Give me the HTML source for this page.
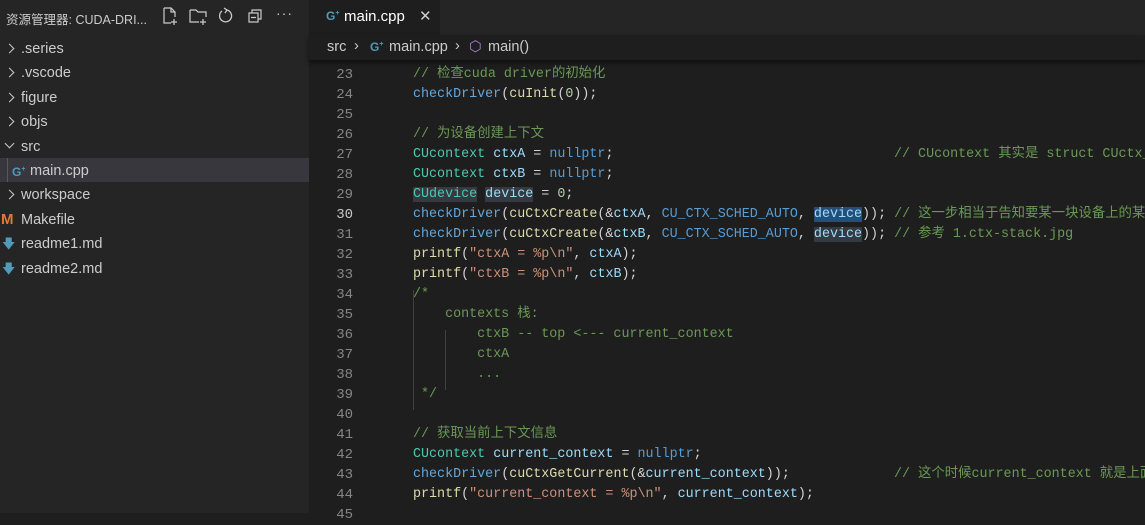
<!DOCTYPE html><html><head><meta charset="utf-8"><style>
*{margin:0;padding:0;box-sizing:border-box}
body{width:1145px;height:513px;overflow:hidden;background:#1e1e1e;font-family:"Liberation Sans","Noto Sans CJK SC",sans-serif;position:relative}
#side{position:absolute;left:0;top:0;width:309px;height:513px;background:#252526;color:#ccc}
.title{position:absolute;left:6px;top:9px;font-size:12.5px;color:#ccc}
.ic{position:absolute;top:6px}
.row{position:absolute;left:0;width:309px;height:24px;font-size:14.5px;line-height:24px;color:#ccc}
.row .t{position:absolute;left:21px}
.chev{position:absolute;left:6px;top:8px;width:7px;height:7px;border-right:1.5px solid #ccc;border-bottom:1.5px solid #ccc;transform:rotate(-45deg)}
.chev.d{transform:rotate(45deg);top:5px}
#tabs{position:absolute;left:309px;top:0;width:836px;height:35px;background:#252526}
#tab{position:absolute;left:309px;top:0;width:131px;height:35px;background:#1e1e1e;color:#fff;font-size:15px}
#crumb{position:absolute;left:309px;top:35px;width:836px;height:25px;background:#1e1e1e;color:#ccc;font-size:14.5px;box-shadow:0 3px 4px #111}
.code{position:absolute;left:0;font-family:"Liberation Mono","Noto Sans CJK SC",monospace;font-size:13.37px;white-space:pre;color:#d4d4d4}
.ln{position:absolute;width:353px;text-align:right;color:#858585;height:20px;line-height:20px;font-size:14px}
.cl{position:absolute;left:413px;height:20px;line-height:20px}
.c{color:#6a9955}.f{color:#dcdcaa}.y{color:#4ec9b0}.v{color:#9cdcfe}.k{color:#569cd6}.s{color:#ce9178}.n{color:#b5cea8}.fn{color:#61a8e0}
.cpp{color:#519aba;font-weight:bold;font-size:12px}
</style></head><body>
<div id="side">
<div class="title">资源管理器: CUDA-DRI...</div>
<svg class="ic" style="left:160px" width="20" height="20" viewBox="0 0 20 20" fill="none" stroke="#ccc" stroke-width="1.2"><path d="M4 2h7l4 4v5M4 2v15h7M11 2v4h4M14 13v6M11 16h6"/></svg>
<svg class="ic" style="left:188px" width="20" height="20" viewBox="0 0 20 20" fill="none" stroke="#ccc" stroke-width="1.2"><path d="M2 4h6l2 2h8v5M2 4v12h9M15 13v6M12 16h6"/></svg>
<svg class="ic" style="left:217px" width="18" height="20" viewBox="0 0 18 20" fill="none" stroke="#ccc" stroke-width="1.3"><path d="M5 5A6 6 0 1 0 10 4M10 4L7 2M10 4L8 7"/></svg>
<svg class="ic" style="left:246px" width="18" height="20" viewBox="0 0 18 20" fill="none" stroke="#ccc" stroke-width="1.2"><rect x="3" y="7" width="9" height="9"/><path d="M6 7V4h9v9h-3M5 11.5h5"/></svg>
<div style="position:absolute;left:276px;top:5px;color:#ccc;font-size:14px;letter-spacing:1px">···</div>
<div class="row" style="top:37px"><div class="chev"></div><span class="t">.series</span></div>
<div class="row" style="top:61px"><div class="chev"></div><span class="t">.vscode</span></div>
<div class="row" style="top:86px"><div class="chev"></div><span class="t">figure</span></div>
<div class="row" style="top:110px"><div class="chev"></div><span class="t">objs</span></div>
<div class="row" style="top:135px"><div class="chev d"></div><span class="t">src</span></div>
<div class="row" style="top:158px;background:#37373d"><div style="position:absolute;left:7px;top:0;width:1px;height:24px;background:#585858"></div><span class="cpp" style="position:absolute;left:12px">G<sup style="font-size:7px">+</sup></span><span class="t" style="left:30px;top:1px">main.cpp</span></div>
<div class="row" style="top:183px"><div class="chev"></div><span class="t">workspace</span></div>
<div class="row" style="top:208px"><span style="position:absolute;left:1px;color:#e37933;font-weight:bold;font-size:15px">M</span><span class="t">Makefile</span></div>
<div class="row" style="top:232px"><span style="position:absolute;left:2px;color:#519aba;font-size:13px">🡇</span><span class="t">readme1.md</span></div>
<div class="row" style="top:257px"><span style="position:absolute;left:2px;color:#519aba;font-size:13px">🡇</span><span class="t">readme2.md</span></div>
</div>
<div id="tabs"></div>
<div id="tab"><span class="cpp" style="position:absolute;left:17px;top:9px">G<sup style="font-size:7px">+</sup></span><span style="position:absolute;left:35px;top:8px">main.cpp</span><span style="position:absolute;left:110px;top:7px;color:#ccc;font-size:15px">✕</span></div>
<div id="crumb"><span style="position:absolute;left:18px;top:4px">src</span><span style="position:absolute;left:45px;top:3px">›</span><span class="cpp" style="position:absolute;left:61px;top:5px">G<sup style="font-size:7px">+</sup></span><span style="position:absolute;left:80px;top:4px">main.cpp</span><span style="position:absolute;left:146px;top:3px">›</span><span style="position:absolute;left:160px;top:4px;color:#b180d7">⬡</span><span style="position:absolute;left:179px;top:4px">main()</span></div>
<div class="code" style="top:65px">
<div class="ln" style="top:0">23</div><div class="cl c" style="top:0">// 检查cuda driver的初始化</div>
<div class="ln" style="top:20px">24</div><div class="cl" style="top:20px"><span class="fn">checkDriver</span>(<span class="f">cuInit</span>(<span class="n">0</span>));</div>
<div class="ln" style="top:40px">25</div>
<div class="ln" style="top:60px">26</div><div class="cl c" style="top:60px">// 为设备创建上下文</div>
<div class="ln" style="top:80px">27</div><div class="cl" style="top:80px"><span class="y">CUcontext</span> <span class="v">ctxA</span> = <span class="k">nullptr</span>;</div><div class="cl c" style="top:80px;left:894px">// CUcontext 其实是 struct CUctx_st*</div>
<div class="ln" style="top:100px">28</div><div class="cl" style="top:100px"><span class="y">CUcontext</span> <span class="v">ctxB</span> = <span class="k">nullptr</span>;</div>
<div class="ln" style="top:120px">29</div><div class="cl" style="top:120px"><span class="y" style="background:#343a40">CUdevice</span> <span class="v" style="background:#343a40">device</span> = <span class="n">0</span>;</div>
<div class="ln" style="top:140px;color:#c6c6c6">30</div><div class="cl" style="top:140px"><span class="fn">checkDriver</span>(<span class="f">cuCtxCreate</span>(&amp;<span class="v">ctxA</span>, <span class="k">CU_CTX_SCHED_AUTO</span>, <span class="v" style="background:#264f78">device</span>)); <span class="c">// 这一步相当于告知要某一块设备上的某块</span></div>
<div class="ln" style="top:160px">31</div><div class="cl" style="top:160px"><span class="fn">checkDriver</span>(<span class="f">cuCtxCreate</span>(&amp;<span class="v">ctxB</span>, <span class="k">CU_CTX_SCHED_AUTO</span>, <span class="v" style="background:#343a40">device</span>)); <span class="c">// 参考 1.ctx-stack.jpg</span></div>
<div class="ln" style="top:180px">32</div><div class="cl" style="top:180px"><span class="f">printf</span>(<span class="s">"ctxA = %p\n"</span>, <span class="v">ctxA</span>);</div>
<div class="ln" style="top:200px">33</div><div class="cl" style="top:200px"><span class="f">printf</span>(<span class="s">"ctxB = %p\n"</span>, <span class="v">ctxB</span>);</div>
<div class="ln" style="top:220px">34</div><div class="cl c" style="top:220px">/*</div>
<div class="ln" style="top:240px">35</div><div class="cl c" style="top:240px">    contexts 栈:</div>
<div class="ln" style="top:260px">36</div><div class="cl c" style="top:260px">        ctxB -- top &lt;--- current_context</div>
<div class="ln" style="top:280px">37</div><div class="cl c" style="top:280px">        ctxA</div>
<div class="ln" style="top:300px">38</div><div class="cl c" style="top:300px">        ...</div>
<div class="ln" style="top:320px">39</div><div class="cl c" style="top:320px"> */</div>
<div class="ln" style="top:340px">40</div>
<div class="ln" style="top:360px">41</div><div class="cl c" style="top:360px">// 获取当前上下文信息</div>
<div class="ln" style="top:380px">42</div><div class="cl" style="top:380px"><span class="y">CUcontext</span> <span class="v">current_context</span> = <span class="k">nullptr</span>;</div>
<div class="ln" style="top:400px">43</div><div class="cl" style="top:400px"><span class="fn">checkDriver</span>(<span class="f">cuCtxGetCurrent</span>(&amp;<span class="v">current_context</span>));</div><div class="cl c" style="top:400px;left:894px">// 这个时候current_context 就是上面</div>
<div class="ln" style="top:420px">44</div><div class="cl" style="top:420px"><span class="f">printf</span>(<span class="s">"current_context = %p\n"</span>, <span class="v">current_context</span>);</div>
<div class="ln" style="top:440px">45</div>
<div style="position:absolute;left:413px;top:225px;width:1px;height:120px;background:#404040"></div>
<div style="position:absolute;left:445px;top:265px;width:1px;height:60px;background:#404040"></div>
</div>
</body></html>
